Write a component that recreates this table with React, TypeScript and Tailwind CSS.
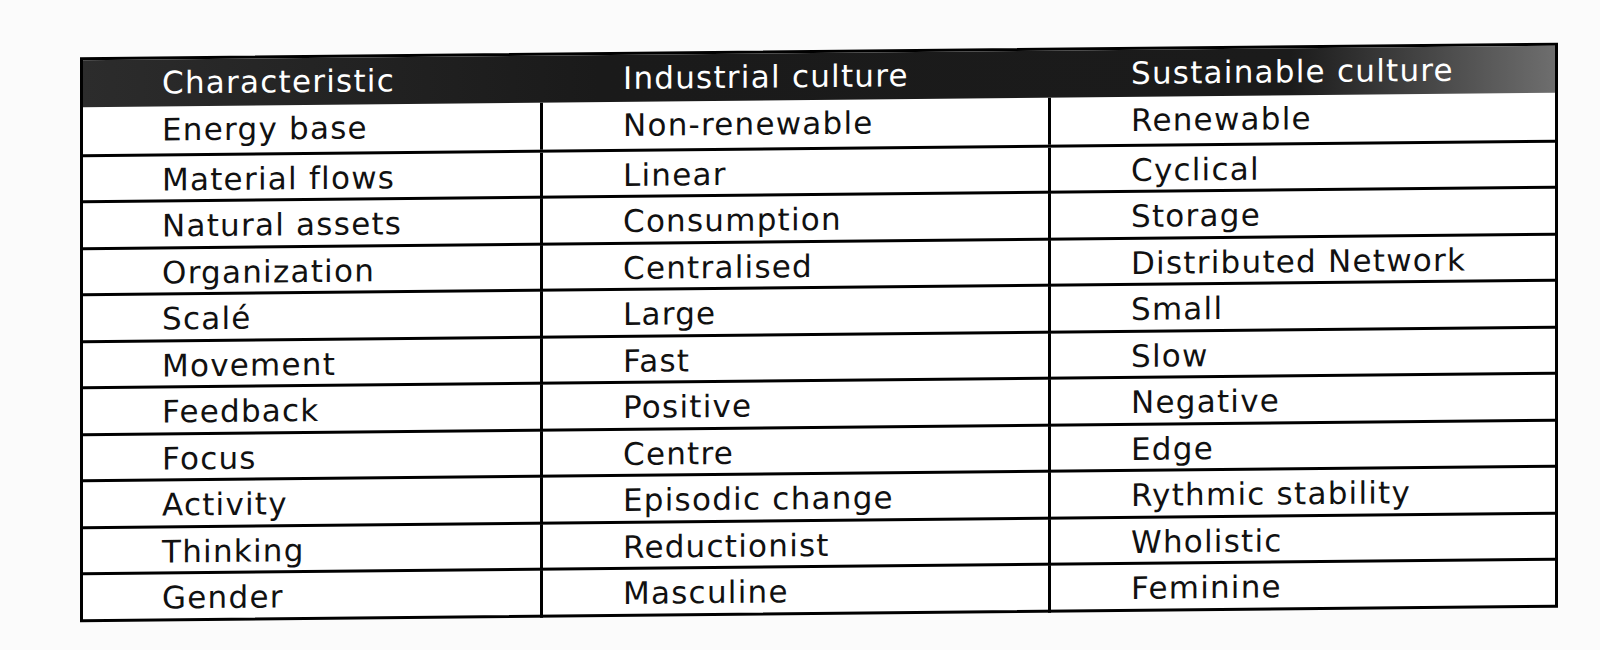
const rows: [string, string, string][] = [
  ['Energy base', 'Non-renewable', 'Renewable'],
  ['Material flows', 'Linear', 'Cyclical'],
  ['Natural assets', 'Consumption', 'Storage'],
  ['Organization', 'Centralised', 'Distributed Network'],
  ['Scalé', 'Large', 'Small'],
  ['Movement', 'Fast', 'Slow'],
  ['Feedback', 'Positive', 'Negative'],
  ['Focus', 'Centre', 'Edge'],
  ['Activity', 'Episodic change', 'Rythmic stability'],
  ['Thinking', 'Reductionist', 'Wholistic'],
  ['Gender', 'Masculine', 'Feminine'],
];

export default function App() {
  return (
    <div className="w-[1600px] h-[650px] bg-[#fbfbfb] overflow-hidden font-['DejaVu_Sans',sans-serif] text-[#111] text-[31px] tracking-[0.04em]">
      <div className="ml-[80px] mt-[50px] w-[1478px] border-[3px] border-black -skew-y-[0.57deg] bg-white">
        {/* Header */}
        <div className="grid grid-cols-[457px_508px_507px] h-[47px] bg-[linear-gradient(to_right,#2c2c2c,#1a1a1a_35%,#1b1b1b_82%,#6e6e6e)] text-white">
          <div className="flex items-center pl-[79px]">Characteristic</div>
          <div className="flex items-center pl-[83px]">Industrial culture</div>
          <div className="flex items-center pl-[83px]">Sustainable culture</div>
        </div>

        {/* Body */}
        {rows.map((r, i) => (
          <div
            key={r[0]}
            className={`grid grid-cols-[457px_508px_507px] h-[46.5px] ${i > 0 ? 'border-t-[3px] border-black' : ''}`}
          >
            <div className="flex items-center pl-[79px]">{r[0]}</div>
            <div className="flex items-center pl-[80px] border-l-[3px] border-black">{r[1]}</div>
            <div className="flex items-center pl-[80px] border-l-[3px] border-black">{r[2]}</div>
          </div>
        ))}
      </div>
    </div>
  );
}
